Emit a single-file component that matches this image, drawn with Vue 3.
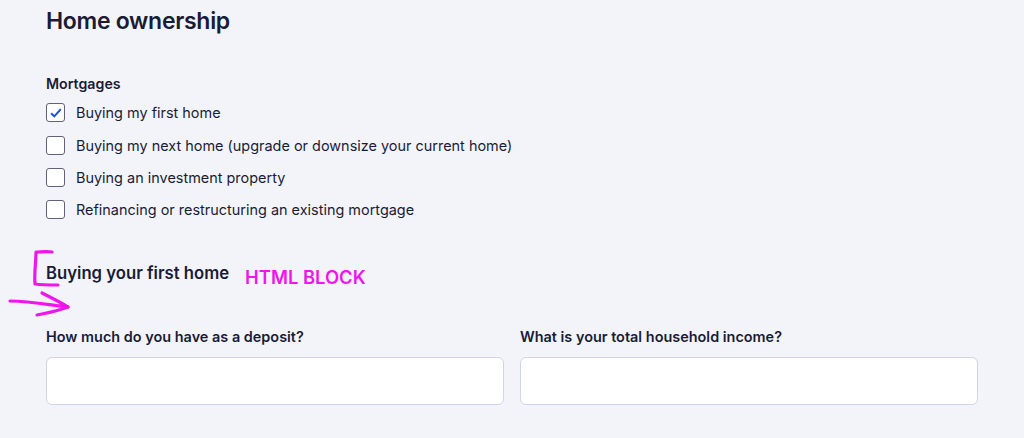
<script setup>
const options = [
  { label: 'Buying my first home', checked: true },
  { label: 'Buying my next home (upgrade or downsize your current home)', checked: false },
  { label: 'Buying an investment property', checked: false },
  { label: 'Refinancing or restructuring an existing mortgage', checked: false }
]
const fields = ['How much do you have as a deposit?', 'What is your total household income?']
</script>

<template>
  <main class="page">
    <h1 class="title">Home ownership</h1>
    <section class="group">
      <h2 class="group-title">Mortgages</h2>
      <ul class="options">
        <li v-for="o in options" :key="o.label" class="option">
          <span class="box">
            <svg v-if="o.checked" width="12" height="10" viewBox="0 0 12 10" fill="none">
              <path d="M1.2 5.2 L4.3 8.4 L10.8 1.2" stroke="#1d4ed8" stroke-width="2" />
            </svg>
          </span>
          <span>{{ o.label }}</span>
        </li>
      </ul>
    </section>
    <div class="block-head">
      <h2 class="sub">Buying your first home</h2>
      <span class="note">HTML BLOCK</span>
      <svg class="marks" width="80" height="90" viewBox="0 0 80 90" fill="none" stroke="#f015ea" stroke-width="3.2" stroke-linecap="round" stroke-linejoin="round">
        <path d="M52 14 C46 13 41 14 36 14 C36 24 34 34 35 46 C42 47 50 47 58 47" />
        <path d="M10 63 C30 63 50 67 68 69 C60 64 50 59 42 55" />
        <path d="M68 69 C58 73 47 75 37 77" />
      </svg>
    </div>
    <div class="fields">
      <label v-for="f in fields" :key="f" class="field">
        <span class="field-label">{{ f }}</span>
        <input class="input" type="text" />
      </label>
    </div>
  </main>
</template>

<style>
html, body { margin: 0; background: #f3f4fa; }
</style>

<style scoped>
.page {
  width: 1024px;
  height: 438px;
  box-sizing: border-box;
  padding: 7px 46px 0;
  overflow: hidden;
  font-family: Inter, "Noto Sans", sans-serif;
  color: #1a1c36;
  background: #f3f4fa;
}
.title { margin: 0; font-size: 23px; line-height: 28px; font-weight: 600; letter-spacing: -0.3px; }
.group { margin-top: 38px; }
.group-title { margin: 0; font-size: 14.2px; line-height: 22px; font-weight: 600; }
.options { list-style: none; margin: 7px 0 0; padding: 0; display: flex; flex-direction: column; gap: 10.8px; }
.option { display: flex; align-items: center; gap: 11px; height: 21.5px; font-size: 14.45px; }
.box {
  width: 17px; height: 17px; box-sizing: content-box;
  border: 1px solid #5f6278; border-radius: 3px; background: #fff;
  display: flex; align-items: center; justify-content: center; flex: none;
}
.block-head { position: relative; display: flex; align-items: center; margin-top: 41px; height: 24px; }
.sub { margin: 0; font-size: 16.7px; font-weight: 600; line-height: 24px; }
.note { margin-left: 16px; margin-top: 7px; color: #f015ea; font-size: 18.4px; font-weight: 600; }
.marks { position: absolute; left: -46px; top: -23px; }
.fields { display: grid; grid-template-columns: 458px 458px; gap: 16px; margin-top: 41px; }
.field { display: flex; flex-direction: column; }
.field-label { font-size: 14.45px; font-weight: 600; line-height: 22px; }
.input {
  margin-top: 9px; height: 48px; box-sizing: border-box; width: 100%;
  background: #fff; border: 1px solid #cfd5ea; border-radius: 6px; outline: none;
}
</style>
